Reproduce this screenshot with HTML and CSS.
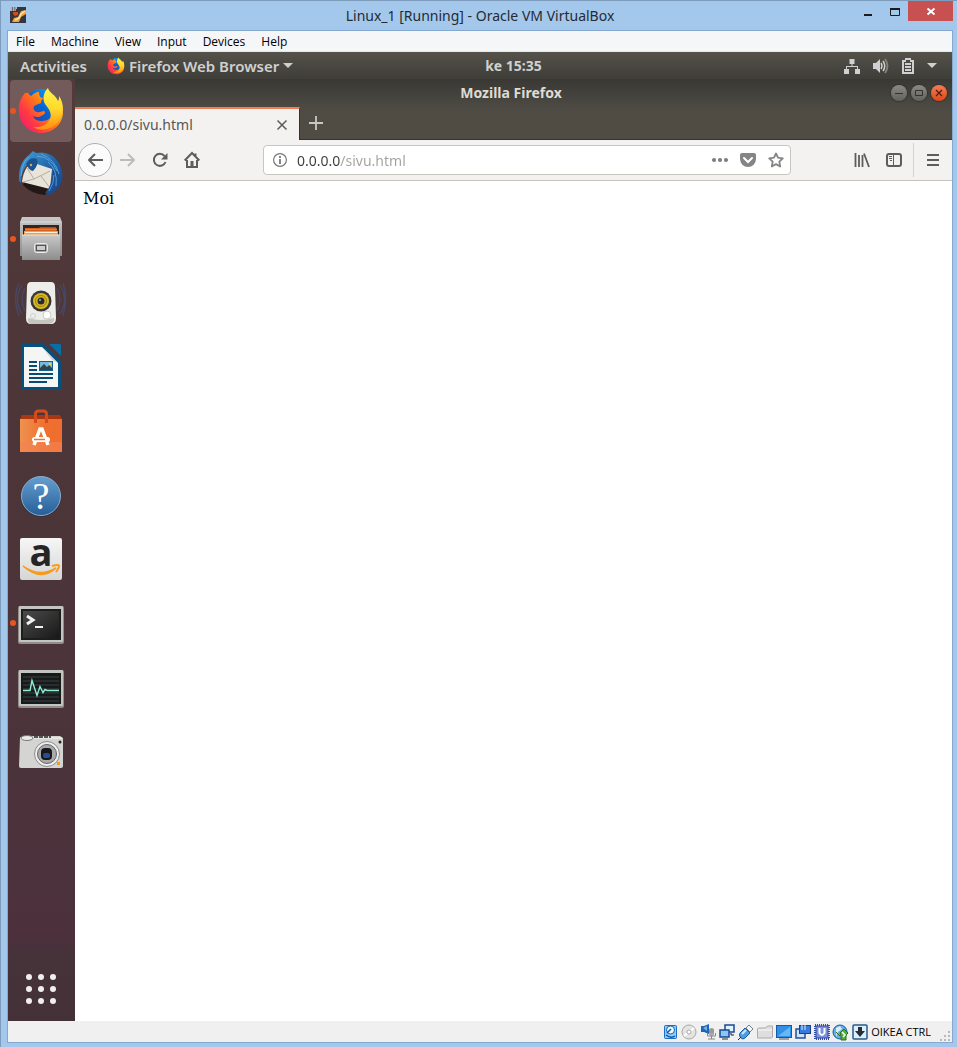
FILE: index.html
```html
<!DOCTYPE html>
<html lang="en">
<head>
<meta charset="utf-8">
<title>Linux_1 [Running] - Oracle VM VirtualBox</title>
<link rel="stylesheet" href="styles.css">
</head>
<body>
<div class="vm-window">
  <header class="titlebar">
    <svg class="app-icon" width="16" height="16" viewBox="0 0 16 16" aria-hidden="true">
      <rect width="16" height="16" fill="#34363f"/>
      <path d="M3 5h5v3l-3 1-2-2z" fill="#d84a14"/>
      <path d="M16 3v4l-5 3-2 5H2l2-4 4-1 3-6z" fill="#f4a13c"/>
      <path d="M15 4l-4 3-2 4-4 2" fill="none" stroke="#ffe3a0" stroke-width="1.5"/>
      <path d="M0 1h7M0 3h6" stroke="#dfe2e8" stroke-width="1.4" stroke-dasharray="2 .6"/>
    </svg>
    <h1 class="window-title">Linux_1 [Running] - Oracle VM VirtualBox</h1>
    <div class="window-controls">
      <button class="win-btn" aria-label="Minimize"><svg width="12" height="12" viewBox="0 0 12 12"><path d="M2 10h8" stroke="#1c1c1c" stroke-width="2"/></svg></button>
      <button class="win-btn" aria-label="Maximize"><svg width="12" height="12" viewBox="0 0 12 12"><path d="M1.500 3v7.500h9V3" fill="none" stroke="#1c1c1c"/><path d="M1 4h10" stroke="#1c1c1c" stroke-width="2"/></svg></button>
      <button class="win-btn win-close" aria-label="Close"><svg width="12" height="12" viewBox="0 0 12 12"><path d="M2.500 3.500l7 6M9.500 3.500l-7 6" stroke="#fff" stroke-width="2"/></svg></button>
    </div>
  </header>

  <div class="client">
    <nav class="menubar">
      <button>File</button><button>Machine</button><button>View</button><button>Input</button><button>Devices</button><button>Help</button>
    </nav>

    <div class="topbar">
      <div class="top-left">
        <button class="top-btn">Activities</button>
        <button class="top-btn app-menu">
          <svg width="18" height="18" viewBox="0 0 48 48" aria-hidden="true"><use href="#firefox"/></svg>
          Firefox Web Browser
          <svg width="10" height="6" viewBox="0 0 10 6" aria-hidden="true"><path d="M0 0h10L5 5z" fill="#cfcfcf"/></svg>
        </button>
      </div>
      <button class="top-btn clock">ke 15:35</button>
      <button class="top-btn tray" aria-label="System menu">
        <svg width="16" height="16" viewBox="0 0 16 16"><path d="M5.500 1h5v5H8.500v2H14v3h2v5h-5v-5h2V9H3v2h2v5H0v-5h2V8h5.500V6h-2z" fill="#d0d0d0"/></svg>
        <svg width="16" height="16" viewBox="0 0 16 16"><path d="M0 5h3l4-4v14l-4-4H0z" fill="#d0d0d0"/><path d="M8 5q2 3 0 6M10 3q3.500 5 0 10" fill="none" stroke="#d0d0d0" stroke-width="1.500"/><path d="M12 1q5 7 0 14" fill="none" stroke="#85837d" stroke-width="1.800"/></svg>
        <svg width="12" height="16" viewBox="0 0 12 16"><path d="M3 0h6v2h3v14H0V2h3zM2 4v10h8V4H8V2H4v2z" fill="#d0d0d0" fill-rule="evenodd"/><path d="M3 6h6M3 9h6M3 12h6" stroke="#d0d0d0" stroke-width="2"/></svg>
        <svg width="10" height="6" viewBox="0 0 10 6"><path d="M0 0h10L5 5z" fill="#d0d0d0"/></svg>
      </button>
    </div>

    <div class="desktop">
      <aside class="dock">
        <button class="launcher running active" aria-label="Firefox">
          <svg width="48" height="48" viewBox="0 0 48 48">
            <defs>
              <linearGradient id="ffRing" x1="0" y1=".9" x2="1" y2=".2"><stop offset="0" stop-color="#e9167c"/><stop offset=".3" stop-color="#ff3a43"/><stop offset=".6" stop-color="#ff7b16"/><stop offset="1" stop-color="#ffd72b"/></linearGradient>
              <linearGradient id="ffTail" x1="0" y1="0" x2="0" y2="1"><stop offset="0" stop-color="#fff44b"/><stop offset=".5" stop-color="#ffd92b"/><stop offset="1" stop-color="#ff8c12"/></linearGradient>
              <linearGradient id="ffGlobe" x1="0" y1="1" x2="1" y2="0"><stop offset="0" stop-color="#263b9c"/><stop offset=".5" stop-color="#0763d5"/><stop offset="1" stop-color="#10b2f4"/></linearGradient>
            </defs>
            <g id="firefox">
              <circle cx="24" cy="19" r="17" fill="url(#ffGlobe)"/>
              <path d="M8 6C3 12 1 18 2 26c1 11 10 20 22 20s22-9 22-21c0-7-2-11-4-14 1 9-3 13-6 14-1 6-5 9-11 9-5 0-8-2-9-5 4 2 7 1 10-1 2-1 3-3 1-4-3 0-5 3-9 0-2-2-2-5 1-6l5-2c0-3 1-4 3-5-3 0-5-1-5-6-3 0-6 2-8 4-2-1-3-4-4-3z" fill="url(#ffRing)"/>
              <path d="M31 1c-4 4-6 10-3 16 5 6 7 10 5 15-3 6-9 9-17 8 6 4 17 4 24-4 8-8 7-20 2-27 0 3 0 4-1 5-2-6-9-8-10-13z" fill="url(#ffTail)"/>
            </g>
          </svg>
        </button>
        <button class="launcher" aria-label="Thunderbird">
          <svg width="48" height="48" viewBox="0 0 48 48">
            <defs><linearGradient id="tb" x1="0" y1="0" x2="1" y2="1"><stop offset="0" stop-color="#4aa3dc"/><stop offset=".5" stop-color="#2266ab"/><stop offset="1" stop-color="#173e80"/></linearGradient></defs>
            <path d="M7 30l25 8-4 6Q14 43 6 34z" fill="#241817"/>
            <path d="M2 30Q1 12 12 4l4-4 3 2Q34-1 42 12q7 14 0 24-4 6-11 8L35 22 12 12Q4 19 4 32z" fill="url(#tb)"/>
            <path d="M10 16l10-3 15 5-2 20L5 31q1-9 5-15z" fill="#e9e4da"/>
            <path d="M10 17l7 11 16-8M17 28L6 31M24 25l9 12" fill="none" stroke="#b3ab9e"/>
            <path d="M9 13q4-8 11-5 2 6-4 12-4-1-5-4z" fill="#1b5391"/><circle cx="14" cy="14" r="1.200" fill="#d9a84e"/>
            <path d="M36 18q1 14-8 24 7 0 12-6l1-14z" fill="#1b4e93"/>
            <path d="M20 5q14 1 20 15M24 3q14 5 18 20M31 11q10 8 8 24M12 6Q5 11 4 25M37 24q0 9-5 16" fill="none" stroke="#62b0e2" stroke-width=".8"/>
          </svg>
        </button>
        <button class="launcher running" aria-label="Files">
          <svg width="48" height="48" viewBox="0 0 48 48">
            <defs><linearGradient id="steel" x1="0" y1="0" x2="0" y2="1"><stop offset="0" stop-color="#c8c8c8"/><stop offset="1" stop-color="#8d8d8d"/></linearGradient></defs>
            <path d="M5 2h38l2 5v34H3V7z" fill="url(#steel)"/><path d="M4 7h40" stroke="#dedede"/>
            <rect x="6" y="10" width="36" height="10" fill="#302622"/>
            <path d="M8 13h14l1-1h16v8H8z" fill="#b34b16"/><path d="M8 14.500h32" stroke="#f57b28" stroke-width="2"/><path d="M7 16h34v4H7z" fill="#f59c45"/><path d="M8 17.500h32" stroke="#fff1de" stroke-width="1"/>
            <path d="M5 20h38v25H5z" fill="url(#steel)"/><path d="M5 20h38" stroke="#e4e4e4"/>
            <rect x="17.500" y="28.500" width="13" height="9" rx="2" fill="#a7a7a7" stroke="#ececec"/><rect x="19.500" y="30.500" width="9" height="5" fill="#ccc" stroke="#555"/>
          </svg>
        </button>
        <button class="launcher" aria-label="Rhythmbox">
          <svg width="48" height="48" viewBox="0 0 48 48">
            <g fill="none" stroke="#46496a" stroke-width="1.300"><path d="M8 9Q2 20 8 32M5 6q-9 15 0 29M2 4q-7 15 0 33M40 9q6 11 0 23M43 6q9 15 0 29M46 4q5 15 0 33"/></g>
            <path d="M14 3h20q4 0 4 5l1 31q0 6-5 6H14q-5 0-5-6l1-31q0-5 4-5z" fill="#ededea"/>
            <path d="M11 39q13 4 26 0v3q-2 3-5 3H15q-3 0-4-3z" fill="#c4c4c0"/>
            <circle cx="24" cy="22" r="10.500" fill="#38383b"/><circle cx="24" cy="22" r="8" fill="#d9b91e"/><circle cx="24" cy="22" r="5.500" fill="none" stroke="#998016"/><circle cx="24" cy="22" r="3.500" fill="#292a30"/><circle cx="23" cy="21" r="1" fill="#a8aebb"/>
            <circle cx="30" cy="36" r="4" fill="#fff" stroke="#cacac6"/><circle cx="16" cy="37" r="2.500" fill="none" stroke="#d1d1cd"/>
          </svg>
        </button>
        <button class="launcher" aria-label="LibreOffice Writer">
          <svg width="48" height="48" viewBox="0 0 48 48">
            <path d="M6 1h21l17 17v27q0 2-2 2H6q-2 0-2-2V3q0-2 2-2z" fill="#06507d"/><path d="M32 1h11q1 0 1 1v11z" fill="#086da8"/>
            <path d="M7 4h18l16 16v24H7z" fill="#f5f5f3"/><path d="M25 4l16 16-6-3z" fill="#d3d3d1"/>
            <path d="M12 19h8M12 23h8M12 27h8M12 31h24M12 35h24M12 39h18" stroke="#0a4b75" stroke-width="2"/>
            <rect x="22" y="18" width="14" height="10" fill="#0d6098"/><rect x="23" y="19" width="12" height="8" fill="#76b9dd"/><path d="M23 27v-2l4-4 3 3 2-2 3 3v2z" fill="#34434a"/><circle cx="33" cy="21" r="1.300" fill="#f1d33d"/>
          </svg>
        </button>
        <button class="launcher" aria-label="Ubuntu Software">
          <svg width="48" height="48" viewBox="0 0 48 48">
            <defs><linearGradient id="bag" x1="0" y1="0" x2="1" y2="0"><stop offset="0" stop-color="#ee9250"/><stop offset=".6" stop-color="#ef702e"/><stop offset="1" stop-color="#f06d2f"/></linearGradient></defs>
            <path d="M5 8h38l2 4H3z" fill="#a83712"/><path d="M3 12h42v33H3z" fill="url(#bag)"/><path d="M3 35h42v10H3z" fill="#f28252" opacity=".65"/>
            <path d="M18.500 16V7q0-3 3-3h5q3 0 3 3v9" fill="none" stroke="#d24c1d" stroke-width="3"/>
            <path d="M17 38l6-16h2l6 16" fill="none" stroke="#fff" stroke-width="3.500"/><rect x="15" y="30" width="18" height="5" rx="2.500" fill="#fff"/><path d="M17 32.500h11" stroke="#ee752f" stroke-width="1.500"/>
          </svg>
        </button>
        <button class="launcher" aria-label="Help">
          <svg width="48" height="48" viewBox="0 0 48 48">
            <defs><linearGradient id="help" x1="0" y1="0" x2="0" y2="1"><stop offset="0" stop-color="#669ed0"/><stop offset="1" stop-color="#245f98"/></linearGradient></defs>
            <circle cx="24" cy="26" r="20" fill="#252c3d" opacity=".5"/><circle cx="24" cy="25" r="19.500" fill="url(#help)" stroke="#8caccb"/>
            <text x="24" y="38" class="help-glyph">?</text>
          </svg>
        </button>
        <button class="launcher" aria-label="Amazon">
          <svg width="48" height="48" viewBox="0 0 48 48">
            <defs><linearGradient id="amz" x1="0" y1="0" x2="0" y2="1"><stop offset="0" stop-color="#f6f6f6"/><stop offset="1" stop-color="#d6d6d6"/></linearGradient></defs>
            <rect x="3" y="3" width="42" height="42" rx="2" fill="url(#amz)"/><text x="24" y="31" class="amazon-glyph">a</text>
            <path d="M6 31q17 12 33 2-15 14-33-2z" fill="#f89a1c" stroke="#f89a1c" stroke-width="1.500"/><path d="M35 31q7-2 7 0t-3 6" fill="none" stroke="#f89a1c" stroke-width="2"/>
          </svg>
        </button>
        <button class="launcher running" aria-label="Terminal">
          <svg width="48" height="48" viewBox="0 0 48 48">
            <defs><linearGradient id="screen" x1="0" y1="0" x2="1" y2="1"><stop offset="0" stop-color="#4b4b4b"/><stop offset="1" stop-color="#181818"/></linearGradient></defs>
            <rect x="1" y="7" width="46" height="38" rx="2" fill="#8e8e8c"/><rect x="2" y="7" width="44" height="36" rx="1" fill="#c4c4c0"/><rect x="4" y="10" width="40" height="31" fill="#1d1d1d"/><rect x="6" y="12" width="36" height="27" fill="url(#screen)"/>
            <path d="M10 17l6 4-6 4" fill="none" stroke="#f1f1f1" stroke-width="3"/><path d="M18 28h8" stroke="#f1f1f1" stroke-width="2"/>
          </svg>
        </button>
        <button class="launcher" aria-label="System Monitor">
          <svg width="48" height="48" viewBox="0 0 48 48">
            <rect x="1" y="7" width="46" height="38" rx="2" fill="#8e8e8c"/><rect x="2" y="7" width="44" height="36" rx="1" fill="#c4c4c0"/><rect x="4" y="10" width="40" height="31" fill="#161a1b"/>
            <path d="M6 14h36M6 18h36M6 22h36M6 26h36M6 30h36M6 34h36M6 38h36" stroke="#394341"/>
            <path d="M6 27.500h7l2-10 5 15 3-9 3 6 2-3 2 1h12" fill="none" stroke="#8cedd2" stroke-width="1.400"/>
          </svg>
        </button>
        <button class="launcher" aria-label="Screenshot">
          <svg width="48" height="48" viewBox="0 0 48 48">
            <path d="M3 11l3-2h37l3 2v28q0 2-2 2H4q-2 0-2-2z" fill="#d4d4d2"/><path d="M3 11h42" stroke="#f7f7f7"/><path d="M17 10h17" stroke="#555" stroke-width="2" stroke-dasharray="4 1"/><ellipse cx="10" cy="11" rx="6" ry="2.500" fill="#e9e9e9" stroke="#777"/>
            <circle cx="30" cy="27" r="12.500" fill="#eee" stroke="#8a8a8a"/><circle cx="30" cy="27" r="9.500" fill="#aaa" stroke="#666"/><rect x="24" y="21" width="11" height="12" rx="4" fill="#15171c"/><rect x="26" y="26" width="7" height="5" rx="2" fill="#264c91"/>
            <circle cx="43" cy="15" r="1.500" fill="#222"/><rect x="40" y="35" width="3" height="3" fill="#f59b23"/>
          </svg>
        </button>
        <button class="launcher show-apps" aria-label="Show applications">
          <svg width="48" height="48" viewBox="0 0 48 48"><g fill="#f0efee"><circle cx="12" cy="12" r="3"/><circle cx="24" cy="12" r="3"/><circle cx="36" cy="12" r="3"/><circle cx="12" cy="24" r="3"/><circle cx="24" cy="24" r="3"/><circle cx="36" cy="24" r="3"/><circle cx="12" cy="36" r="3"/><circle cx="24" cy="36" r="3"/><circle cx="36" cy="36" r="3"/></g></svg>
        </button>
      </aside>

      <section class="browser">
        <header class="browser-title">
          <h2>Mozilla Firefox</h2>
          <div class="browser-controls">
            <button aria-label="Minimize"><svg width="16" height="16" viewBox="0 0 16 16"><path d="M4 8.500h8" stroke="#33322d"/></svg></button>
            <button aria-label="Maximize"><svg width="16" height="16" viewBox="0 0 16 16"><path d="M4.500 5.500h7v5h-7z" fill="none" stroke="#33322d"/></svg></button>
            <button class="quit" aria-label="Close"><svg width="16" height="16" viewBox="0 0 16 16"><path d="M5 5l6 6M11 5l-6 6" stroke="#4b2011" stroke-width="1.300"/></svg></button>
          </div>
        </header>
        <div class="tabs">
          <div class="tab">
            <span>0.0.0.0/sivu.html</span>
            <button class="tab-close" aria-label="Close tab"><svg width="12" height="12" viewBox="0 0 12 12"><path d="M1.500 1.500l9 9M10.500 1.500l-9 9" stroke="#5b5b59" stroke-width="1.500"/></svg></button>
          </div>
          <button class="new-tab" aria-label="New tab"><svg width="14" height="14" viewBox="0 0 14 14"><path d="M7 0v14M0 7h14" stroke="#c9c7c1" stroke-width="1.800"/></svg></button>
        </div>
        <div class="toolbar">
          <button class="back" aria-label="Back"><svg width="16" height="16" viewBox="0 0 16 16"><path d="M16 8H2M8 2L2 8l6 6" fill="none" stroke="#5d5d5b" stroke-width="2" stroke-linejoin="round"/></svg></button>
          <button class="tool" aria-label="Forward" disabled><svg width="16" height="16" viewBox="0 0 16 16"><path d="M0 8h14M8 2l6 6-6 6" fill="none" stroke="#bdbbb9" stroke-width="2" stroke-linejoin="round"/></svg></button>
          <button class="tool" aria-label="Reload"><svg width="16" height="16" viewBox="0 0 16 16"><path d="M12.500 4A6 6 0 1 0 13.500 10" fill="none" stroke="#5d5d5b" stroke-width="2"/><path d="M15.500 1v6.500H9z" fill="#5d5d5b"/></svg></button>
          <button class="tool" aria-label="Home"><svg width="16" height="16" viewBox="0 0 16 16"><path d="M.7 8.500L8 1l7.300 7.500M11.500 1.500v3" fill="none" stroke="#5d5d5b" stroke-width="2"/><path d="M3 8v7h10V8" fill="none" stroke="#5d5d5b" stroke-width="2"/><path d="M6.500 15V9h3v6z" fill="#5d5d5b"/></svg></button>
          <div class="urlbar">
            <button class="url-icon" aria-label="Site information"><svg width="14" height="14" viewBox="0 0 14 14"><circle cx="7" cy="7" r="6.400" fill="none" stroke="#777" stroke-width="1.200"/><path d="M7 6v5M7 3v2" stroke="#777" stroke-width="1.800"/></svg></button>
            <input class="address" type="text" value="0.0.0.0/sivu.html" aria-label="Address">
            <button class="url-icon" aria-label="Page actions"><svg width="16" height="16" viewBox="0 0 16 16"><g fill="#7c7c7c"><circle cx="2" cy="8" r="2"/><circle cx="8" cy="8" r="2"/><circle cx="14" cy="8" r="2"/></g></svg></button>
            <button class="url-icon" aria-label="Save to Pocket"><svg width="16" height="16" viewBox="0 0 16 16"><path d="M2 1h12q2 0 2 2v4a8 8 0 0 1-16 0V3q0-2 2-2z" fill="#858585"/><path d="M4 6l4 4 4-4" fill="none" stroke="#fff" stroke-width="2" stroke-linecap="round"/></svg></button>
            <button class="url-icon" aria-label="Bookmark"><svg width="16" height="16" viewBox="0 0 16 16"><path d="M8 1.500l2 4.200 4.800.6-3.500 3.300.9 4.900L8 12.100l-4.200 2.400.9-4.900L1.200 6.300 6 5.700z" fill="none" stroke="#858585" stroke-width="1.800" stroke-linejoin="round"/></svg></button>
          </div>
          <button class="tool" aria-label="Library"><svg width="16" height="16" viewBox="0 0 16 16"><path d="M1.500 1v14M5 3v12M8.500 3v12M10 1.500L15 15" stroke="#5d5d5b" stroke-width="1.800"/></svg></button>
          <button class="tool" aria-label="Sidebar"><svg width="16" height="16" viewBox="0 0 16 16"><rect x="1" y="2" width="14" height="12" rx="2" fill="none" stroke="#5d5d5b" stroke-width="2"/><path d="M7.500 2v12M3 4.500h3M3 6.500h3M4 8.500h2" stroke="#5d5d5b"/></svg></button>
          <button class="tool menu" aria-label="Open menu"><svg width="12" height="12" viewBox="0 0 12 12"><path d="M0 1h12M0 6h12M0 11h12" stroke="#5d5d5b" stroke-width="2"/></svg></button>
        </div>
        <main class="page">Moi</main>
      </section>
    </div>

    <footer class="statusbar">
      <svg width="16" height="16" viewBox="0 0 16 16"><rect x="2" y="1" width="13" height="14" rx="2" fill="#1c6fc4"/><rect x="3" y="2" width="11" height="12" fill="#8ecbf5"/><circle cx="8.500" cy="6" r="4" fill="#eef8ff" stroke="#1564b0"/><path d="M5 9l4-4M4 11q5 4 9 1" stroke="#1454a0" stroke-width="1.500" fill="none"/></svg>
      <svg width="16" height="16" viewBox="0 0 16 16"><circle cx="8" cy="8" r="7" fill="#e4e4e4" stroke="#a8a8a8"/><path d="M8 8l5-4M8 8l-5 4" stroke="#fff" stroke-width="2"/><circle cx="8" cy="8" r="2" fill="#fff" stroke="#aaa"/></svg>
      <svg width="16" height="16" viewBox="0 0 16 16"><path d="M1 2h3l5-2v10L4 8H1z" fill="#1c65b8"/><path d="M3 4l4-2v5z" fill="#72b2e5"/><rect x="9" y="4" width="5" height="8" rx="2" fill="#aaa"/><path d="M7.500 9v3h8V9M11.500 12v3M8 15h7M9 6h5M9 8h5" fill="none" stroke="#888"/></svg>
      <svg width="16" height="16" viewBox="0 0 16 16"><rect x="6" y="1" width="9" height="7" fill="#e4f2ff" stroke="#174a94" stroke-width="1.500"/><path d="M12 9v2h3" fill="none" stroke="#222"/><rect x="1" y="6" width="9" height="7" fill="#8cc6f6" stroke="#174a94" stroke-width="1.500"/><path d="M3 15h6" stroke="#333"/></svg>
      <svg width="16" height="16" viewBox="0 0 16 16"><path d="M11 1l4 4-3 3-4-4z" fill="#f2f5f8" stroke="#718297"/><path d="M7 4l5 5-5 5q-2 2-4 0l-1-1q-1-2 0-4z" fill="#4b9de3" stroke="#1d5da8"/><path d="M4 10l4-4" stroke="#cce9ff" stroke-width="2"/><path d="M3 13l-3 3" stroke="#222"/></svg>
      <svg width="16" height="16" viewBox="0 0 16 16"><path d="M.5 5l1-1h7l2-2h5v11l-1 1H.5z" fill="#dedede" stroke="#aaa"/><path d="M1 6h14" stroke="#f8f8f8"/></svg>
      <svg width="16" height="16" viewBox="0 0 16 16"><rect x=".5" y="1.500" width="15" height="12" fill="#308fe6" stroke="#145aa7"/><path d="M2 12L14 3v9z" fill="#65b9f6"/><path d="M3 15h10" stroke="#555"/></svg>
      <svg width="16" height="16" viewBox="0 0 16 16"><rect x="1" y="5" width="9" height="9" fill="#cce3fa" stroke="#224e9e" stroke-width="1.500"/><rect x="4.500" y="1.500" width="11" height="8" fill="#377bdb" stroke="#1c3f8c"/><path d="M7 1v5M10 1v5" stroke="#dcecff"/></svg>
      <svg width="16" height="16" viewBox="0 0 16 16"><rect x="1" y="1" width="14" height="14" fill="none" stroke="#324da5" stroke-width="2" stroke-dasharray="1 1"/><rect x="2" y="2" width="12" height="12" fill="#7c91dd" stroke="#304ba5"/><path d="M5.500 4v5q2.500 4 5 0V4" fill="none" stroke="#fff" stroke-width="2"/></svg>
      <svg width="16" height="16" viewBox="0 0 16 16"><circle cx="7" cy="8" r="7" fill="#68ace5" stroke="#1c5c9e"/><path d="M3 4l4-2 2 3-4 3-2 5" fill="#d6eff9"/><path d="M3 8l4 4M7 9l4-4 4 4-2 2v5H8v-4z" fill="#54ae35" stroke="#276e1f"/><path d="M9 8l3 3-2 2" fill="none" stroke="#fff" stroke-width="1.500"/></svg>
      <svg width="16" height="16" viewBox="0 0 16 16"><rect x="1" y="1" width="14" height="14" rx="1" fill="#dceeff" stroke="#285987" stroke-width="1.500"/><path d="M6 3h4v4h3l-5 6-5-6h3z" fill="#292e36"/></svg>
      <span class="host-key">OIKEA CTRL</span>
      <svg class="grip" width="12" height="12" viewBox="0 0 12 12"><path d="M8 2h2M8 6h2M4 6h2M8 10h2M4 10h2M0 10h2" stroke="#b8b8b8" stroke-width="2"/></svg>
    </footer>
  </div>
</div>
</body>
</html>
```
FILE: styles.css
```css
* { box-sizing: border-box; }

body {
  margin: 0;
  font-family: "Noto Sans", sans-serif;
}

button {
  display: flex;
  align-items: center;
  justify-content: center;
  padding: 0;
  border: 0;
  background: none;
  color: inherit;
  font: inherit;
}

svg {
  display: block;
  flex: none;
  overflow: visible;
}

h1, h2 { margin: 0; }

.vm-window {
  display: flex;
  flex-direction: column;
  min-height: 100vh;
  padding: 0 4px 4px 6px;
  border-top: 1px solid #7d9bbb;
  border-left: 1px solid #7d9bbb;
  background: #a4c8ec;
}

/* Host window title */
.titlebar {
  display: grid;
  grid-template-columns: 1fr auto 1fr;
  height: 29px;
}

.app-icon { margin: 6px 3px; }

.window-title {
  color: #252b33;
  font-size: 14px;
  font-weight: 400;
  line-height: 30px;
}

.window-controls {
  display: flex;
  justify-content: flex-end;
}

.win-btn {
  width: 27px;
  height: 20px;
}

.win-close {
  width: 45px;
  background: #c75050;
}

.client {
  display: flex;
  flex: 1;
  flex-direction: column;
  border: 1px solid #84a8cf;
}

.menubar {
  display: flex;
  gap: 16px;
  height: 21px;
  padding: 0 8px;
  border-bottom: 1px solid #e8e8ea;
  background: #f5f6f8;
  color: #000;
  font-family: "Open Sans", sans-serif;
  font-size: 12px;
}

/* Guest desktop panel */
.topbar {
  display: grid;
  grid-template-columns: 67px 1fr;
  height: 27px;
  background: linear-gradient(#55524a, #3e3d38);
  color: #d0d0d0;
  font-size: 14px;
  font-weight: 700;
}

.top-left, .clock, .tray { grid-row: 1; }

.top-left {
  display: flex;
  grid-column: 1 / -1;
  gap: 20px;
  padding-left: 12px;
  font-size: 15px;
  font-weight: 600;
}

.app-menu { gap: 4px; }

.clock {
  grid-column: 2;
  justify-self: center;
}

.tray {
  grid-column: 2;
  justify-self: end;
  gap: 13px;
  padding-right: 15px;
}

.desktop {
  display: flex;
  flex: 1;
}

.dock {
  display: flex;
  flex: none;
  flex-direction: column;
  gap: 2px;
  width: 67px;
  padding: 1px 2px;
  background: linear-gradient(#543a3a, #4c3638 35%, #4b343a 65%, #4c313d 91%, #463239 93%, #443137);
}

.launcher {
  position: relative;
  width: 62px;
  height: 62px;
  border-radius: 4px;
}

.launcher.active { background: #735b5b; }

.launcher.running::before {
  position: absolute;
  top: 28px;
  left: 0;
  width: 6px;
  height: 6px;
  border-radius: 50%;
  background: #e95420;
  content: "";
}

.show-apps { margin-top: auto; }

.help-glyph {
  fill: #fff;
  font-family: "Liberation Serif", serif;
  font-size: 38px;
  text-anchor: middle;
}

.amazon-glyph {
  fill: #252525;
  font-family: "Open Sans", sans-serif;
  font-size: 38px;
  font-weight: 700;
  text-anchor: middle;
}

/* Browser */
.browser {
  display: flex;
  flex: 1;
  flex-direction: column;
  min-width: 0;
  background: #fff;
}

.browser-title {
  display: grid;
  grid-template-columns: 1fr auto 1fr;
  align-items: center;
  height: 28px;
  padding-right: 5px;
  background: linear-gradient(#393834, #4c4a43);
  color: #dedbd2;
}

.browser-title h2 {
  grid-column: 2;
  font-size: 14px;
  line-height: 28px;
}

.browser-controls {
  display: flex;
  justify-content: flex-end;
  gap: 4px;
}

.browser-controls button {
  width: 16px;
  height: 16px;
  border-radius: 50%;
  background: linear-gradient(#8b8983, #63615b);
  box-shadow: 0 0 1px 1px #35342f;
}

.browser-controls .quit { background: linear-gradient(#f47b54, #df4817); }

.tabs {
  display: flex;
  height: 33px;
  border-bottom: 1px solid #34332f;
  background: linear-gradient(#4c4a43, #504c44 8px);
}

.tab {
  display: flex;
  align-items: center;
  justify-content: space-between;
  width: 225px;
  height: 33px;
  padding: 0 11px 0 9px;
  border-top: 2px solid #f37d52;
  border-right: 1px solid #34332f;
  background: #f3f2f1;
  color: #575755;
  font-size: 14px;
}

.new-tab { width: 32px; }

.toolbar {
  display: flex;
  align-items: center;
  height: 41px;
  padding-left: 3px;
  border-bottom: 1px solid #c5c2bf;
  background: #f3f2f1;
}

.back {
  width: 34px;
  height: 34px;
  border: 1px solid #b0afad;
  border-radius: 50%;
  background: #fbfbfb;
}

.tool {
  width: 32px;
  height: 34px;
}

.urlbar {
  display: flex;
  flex: 1;
  align-items: center;
  gap: 12px;
  height: 30px;
  margin: 0 55px;
  padding: 0 6px 0 9px;
  border: 1px solid #c9c5c0;
  border-radius: 4px;
  background: #fff;
}

.address {
  flex: 1;
  width: 0;
  margin-left: -2px;
  padding: 0;
  border: 0;
  outline: 0;
  background: linear-gradient(90deg, #3c3c3a 43px, #a3a2a0 43px);
  background-clip: text;
  color: transparent;
  font: inherit;
  font-size: 14px;
}

.menu {
  width: 39px;
  margin-left: 3px;
  border-left: 1px solid #d5d3d1;
}

.page {
  flex: 1;
  padding: 8px;
  color: #000;
  font-family: "DejaVu Serif", serif;
  font-size: 16px;
}

/* Virtual machine status */
.statusbar {
  display: flex;
  align-items: center;
  justify-content: flex-end;
  gap: 3px;
  height: 21px;
  background: #f0f0f0;
  color: #000;
  font-family: "Open Sans", sans-serif;
  font-size: 11px;
}

.grip {
  align-self: flex-end;
  margin-left: 6px;
}
```
